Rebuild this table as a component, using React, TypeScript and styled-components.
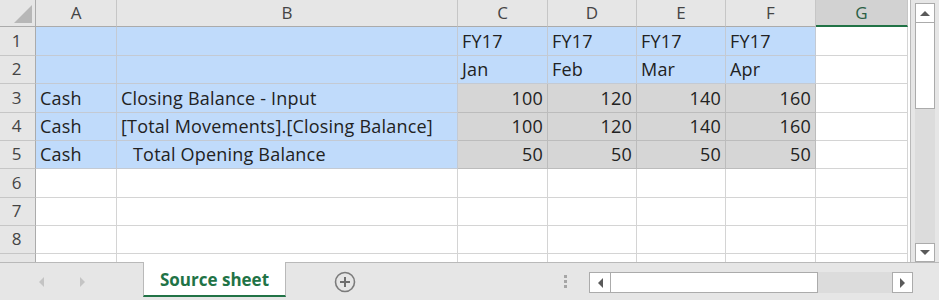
import React from 'react'
import styled, { createGlobalStyle } from 'styled-components'

const GlobalStyle = createGlobalStyle`
  html, body { margin: 0; padding: 0; }
  body {
    background: #e6e6e6;
    font-family: "Open Sans", Lato, "Liberation Sans", sans-serif;
  }
`

const green = '#217346'
const lineColor = '#d4d4d4'

type Tone = 'blue' | 'gray' | 'white'
type CellData = { text?: string; tone: Tone; right?: boolean; indent?: boolean }

const Window = styled.div`
  width: 939px;
  height: 300px;
  display: flex;
  flex-direction: column;
  overflow: hidden;
  background: #e6e6e6;
`

const Main = styled.div`
  display: flex;
  height: 262px;
`

const Sheet = styled.div`
  display: grid;
  grid-template-columns: 36px 81px 341px 90px 89px 89px 90px 92px;
  grid-template-rows: 27px 29px 28px 29px 28px 28px 29px 28px 28px 28px;
  width: 908px;
  height: 262px;
  padding-right: 2px;
  border-right: 1px solid #b9b9b9;
  background: #fff;
  overflow: hidden;
`

const Corner = styled.div`
  background: #e6e6e6;
  border-right: 1px solid #ababab;
  border-bottom: 1px solid #ababab;
  display: flex;
  align-items: flex-end;
  justify-content: flex-end;
  padding: 0 3px 3px 0;
`

const ColHead = styled.div<{ $active?: boolean }>`
  background: ${(p) => (p.$active ? '#d2d2d2' : '#e6e6e6')};
  border-right: 1px solid #c6c6c6;
  border-bottom: ${(p) => (p.$active ? `2px solid ${green}` : '1px solid #ababab')};
  color: ${(p) => (p.$active ? '#2a5f45' : '#444')};
  font-size: 17px;
  display: flex;
  align-items: center;
  justify-content: center;
  padding-bottom: 1px;
`

const RowHead = styled.div`
  background: #e6e6e6;
  border-right: 1px solid #ababab;
  border-bottom: 1px solid #c6c6c6;
  color: #444;
  font-size: 17px;
  display: flex;
  align-items: flex-end;
  justify-content: center;
  padding: 0 2px 3px 0;
`

const toneBg: Record<Tone, string> = {
  blue: '#c0dbfb',
  gray: '#d6d6d6',
  white: '#ffffff',
}

const toneLine: Record<Tone, string> = {
  blue: '#c4cad3',
  gray: '#bcbcbc',
  white: lineColor,
}

const Cell = styled.div<{ $tone: Tone; $right?: boolean; $indent?: boolean }>`
  background: ${(p) => toneBg[p.$tone]};
  border-right: 1px solid ${(p) => toneLine[p.$tone]};
  border-bottom: 1px solid ${(p) => toneLine[p.$tone]};
  color: #222;
  font-size: 18px;
  letter-spacing: 0.2px;
  white-space: nowrap;
  overflow: hidden;
  display: flex;
  align-items: flex-end;
  justify-content: ${(p) => (p.$right ? 'flex-end' : 'flex-start')};
  padding: 0 4px 2px ${(p) => (p.$indent ? '16px' : '4px')};
`

const VScroll = styled.div`
  width: 20px;
  margin: 3px 4px 0 4px;
  display: flex;
  flex-direction: column;
`

const ScrollButton = styled.div<{ $w?: number; $h?: number }>`
  width: ${(p) => (p.$w ? `${p.$w}px` : 'auto')};
  height: ${(p) => (p.$h ? `${p.$h}px` : 'auto')};
  flex-shrink: 0;
  box-sizing: border-box;
  background: #fff;
  border: 1px solid #ababab;
  display: flex;
  align-items: center;
  justify-content: center;
`

const VThumb = styled.div`
  height: 86px;
  box-sizing: border-box;
  background: #fff;
  border: 1px solid #ababab;
  border-top: none;
`

const Track = styled.div`
  flex: 1;
  background: #dcdcdc;
`

const TabBar = styled.div`
  height: 38px;
  box-sizing: border-box;
  border-top: 1px solid #b9b9b9;
  display: flex;
  align-items: flex-start;
`

const Nav = styled.div`
  width: 143px;
  height: 37px;
  display: flex;
  align-items: center;
  gap: 34px;
  padding-left: 38px;
  box-sizing: border-box;
`

const SheetTab = styled.div`
  width: 143px;
  height: 35px;
  box-sizing: border-box;
  margin-top: -1px;
  background: #fff;
  border-left: 1px solid #b9b9b9;
  border-right: 1px solid #b9b9b9;
  border-bottom: 2px solid ${green};
  color: ${green};
  font-weight: 700;
  font-size: 17px;
  display: flex;
  align-items: center;
  justify-content: center;
  padding-top: 1px;
`

const AddSlot = styled.div`
  width: 118px;
  height: 37px;
  display: flex;
  align-items: center;
  justify-content: center;
`

const Spacer = styled.div`
  flex: 1;
`

const Grip = styled.div`
  width: 3px;
  height: 37px;
  margin-right: 22px;
  display: flex;
  flex-direction: column;
  justify-content: center;
  gap: 2px;
  span {
    display: block;
    width: 3px;
    height: 3px;
    background: #a6a6a6;
  }
`

const HScroll = styled.div`
  width: 324px;
  height: 21px;
  margin: 9px 26px 0 0;
  display: flex;
`

const HThumb = styled.div`
  width: 207px;
  box-sizing: border-box;
  background: #fff;
  border: 1px solid #ababab;
  border-left: none;
`

const Arrow = ({ dir, color = '#5a5a5a', size = 7 }: { dir: 'up' | 'down' | 'left' | 'right'; color?: string; size?: number }) => {
  const pts = {
    up: '0,6 5,1 10,6',
    down: '0,1 5,6 10,1',
    left: '6,0 1,5 6,10',
    right: '1,0 6,5 1,10',
  }[dir]
  const vertical = dir === 'up' || dir === 'down'
  return (
    <svg width={vertical ? size + 3 : size} height={vertical ? size : size + 3} viewBox={vertical ? '0 0 10 7' : '0 0 7 10'}>
      <polygon points={pts} fill={color} />
    </svg>
  )
}

const columns = ['A', 'B', 'C', 'D', 'E', 'F', 'G']

const blank = (tone: Tone): CellData => ({ tone })

const rows: CellData[][] = [
  [blank('blue'), blank('blue'), ...['FY17', 'FY17', 'FY17', 'FY17'].map((t) => ({ text: t, tone: 'blue' as Tone })), blank('white')],
  [blank('blue'), blank('blue'), ...['Jan', 'Feb', 'Mar', 'Apr'].map((t) => ({ text: t, tone: 'blue' as Tone })), blank('white')],
  [
    { text: 'Cash', tone: 'blue' },
    { text: 'Closing Balance - Input', tone: 'blue' },
    ...['100', '120', '140', '160'].map((t) => ({ text: t, tone: 'gray' as Tone, right: true })),
    blank('white'),
  ],
  [
    { text: 'Cash', tone: 'blue' },
    { text: '[Total Movements].[Closing Balance]', tone: 'blue' },
    ...['100', '120', '140', '160'].map((t) => ({ text: t, tone: 'gray' as Tone, right: true })),
    blank('white'),
  ],
  [
    { text: 'Cash', tone: 'blue' },
    { text: 'Total Opening Balance', tone: 'blue', indent: true },
    ...['50', '50', '50', '50'].map((t) => ({ text: t, tone: 'gray' as Tone, right: true })),
    blank('white'),
  ],
]

// rows 6-9 are empty
for (let i = 0; i < 4; i++) rows.push(columns.map(() => blank('white')))

export default function App() {
  return (
    <Window>
      <GlobalStyle />
      <Main>
        <Sheet>
          <Corner>
            <svg width="18" height="18" viewBox="0 0 18 18">
              <polygon points="18,0 18,18 0,18" fill="#b7b7b7" />
            </svg>
          </Corner>
          {columns.map((c) => (
            <ColHead key={c} $active={c === 'G'}>
              {c}
            </ColHead>
          ))}
          {rows.map((row, r) => (
            <React.Fragment key={r}>
              <RowHead>{r < 8 ? r + 1 : ''}</RowHead>
              {row.map((cell, c) => (
                <Cell key={c} $tone={cell.tone} $right={cell.right} $indent={cell.indent}>
                  {cell.text}
                </Cell>
              ))}
            </React.Fragment>
          ))}
        </Sheet>
        <VScroll>
          <ScrollButton $h={20}>
            <Arrow dir="up" />
          </ScrollButton>
          <VThumb />
          <Track />
          <ScrollButton $h={19}>
            <Arrow dir="down" />
          </ScrollButton>
        </VScroll>
      </Main>
      <TabBar>
        <Nav>
          <Arrow dir="left" color="#c4c4c4" />
          <Arrow dir="right" color="#c4c4c4" />
        </Nav>
        <SheetTab>Source sheet</SheetTab>
        <AddSlot>
          <svg width="22" height="22" viewBox="0 0 22 22">
            <circle cx="11" cy="11" r="9.5" fill="none" stroke="#7b7b7b" strokeWidth="1.6" />
            <line x1="11" y1="6" x2="11" y2="16" stroke="#6e6e6e" strokeWidth="2" />
            <line x1="6" y1="11" x2="16" y2="11" stroke="#6e6e6e" strokeWidth="2" />
          </svg>
        </AddSlot>
        <Spacer />
        <Grip>
          <span />
          <span />
          <span />
        </Grip>
        <HScroll>
          <ScrollButton $w={22}>
            <Arrow dir="left" />
          </ScrollButton>
          <HThumb />
          <Track />
          <ScrollButton $w={21}>
            <Arrow dir="right" />
          </ScrollButton>
        </HScroll>
      </TabBar>
    </Window>
  )
}
